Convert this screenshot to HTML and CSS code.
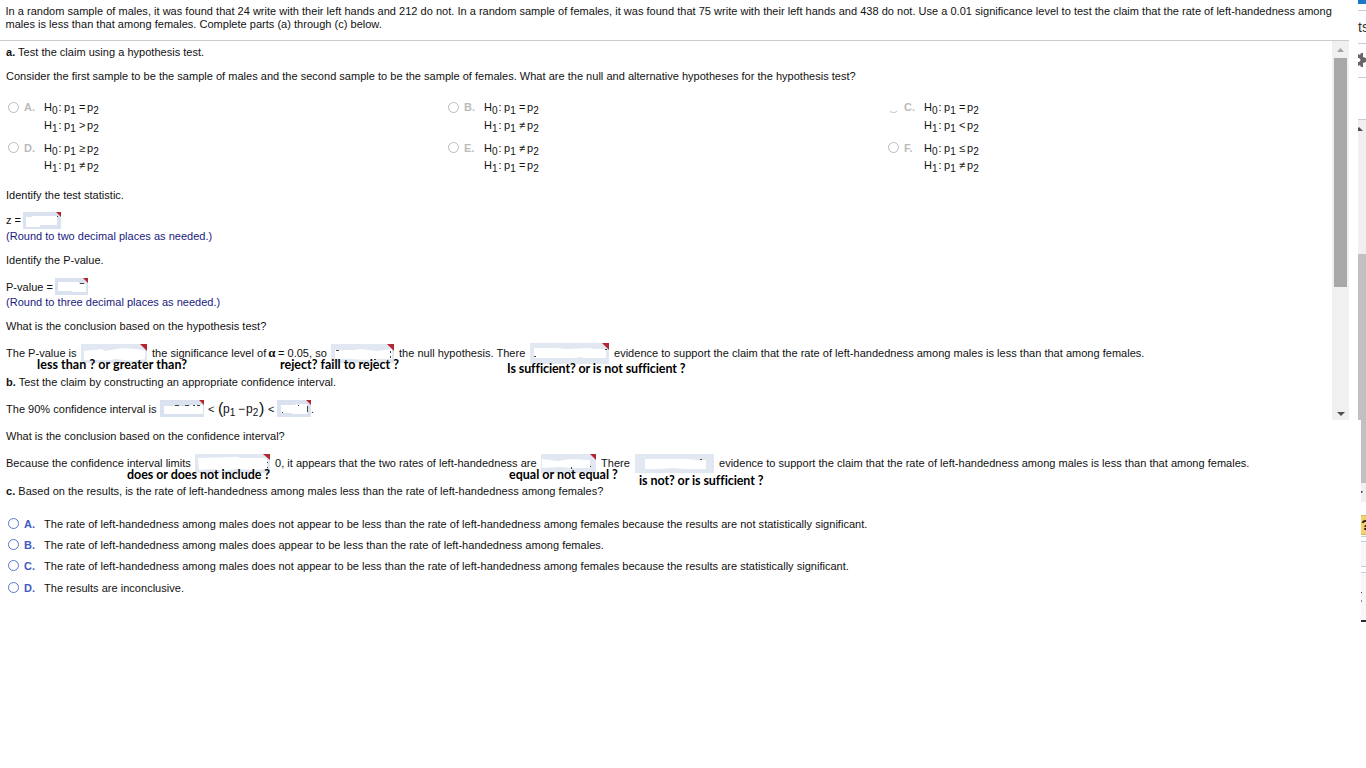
FILE: index.html
```html
<!DOCTYPE html>
<html lang="en">
<head>
<meta charset="utf-8">
<title>Hypothesis test for two proportions</title>
<link rel="stylesheet" href="styles.css">
</head>
<body>
<div class="page">
  <main class="question">
    <header class="prompt">
      <p>In a random sample of males, it was found that 24 write with their left hands and 212 do not. In a random sample of females, it was found that 75 write with their left hands and 438 do not. Use a 0.01 significance level to test the claim that the rate of left-handedness among</p>
      <p>males is less than that among females. Complete parts (a) through (c) below.</p>
    </header>
    <div class="pane">
      <section class="content">
        <p class="row"><span><b>a.</b> Test the claim using a hypothesis test.</span></p>
        <p class="row mt10">Consider the first sample to be the sample of males and the second sample to be the sample of females. What are the null and alternative hypotheses for the hypothesis test?</p>

        <div class="hypotheses">
          <div class="option"><i class="radio"></i><b class="letter">A.</b><div class="formulas">
            <div class="f"><span class="h">H<sub>0</sub>:</span><span class="p">p<sub>1</sub></span><span class="op">=</span><span>p<sub>2</sub></span></div>
            <div class="f"><span class="h">H<sub>1</sub>:</span><span class="p">p<sub>1</sub></span><span class="op">&gt;</span><span>p<sub>2</sub></span></div></div></div>
          <div class="option"><i class="radio"></i><b class="letter">B.</b><div class="formulas">
            <div class="f"><span class="h">H<sub>0</sub>:</span><span class="p">p<sub>1</sub></span><span class="op">=</span><span>p<sub>2</sub></span></div>
            <div class="f"><span class="h">H<sub>1</sub>:</span><span class="p">p<sub>1</sub></span><span class="op">≠</span><span>p<sub>2</sub></span></div></div></div>
          <div class="option"><i class="radio faded"></i><b class="letter">C.</b><div class="formulas">
            <div class="f"><span class="h">H<sub>0</sub>:</span><span class="p">p<sub>1</sub></span><span class="op">=</span><span>p<sub>2</sub></span></div>
            <div class="f"><span class="h">H<sub>1</sub>:</span><span class="p">p<sub>1</sub></span><span class="op">&lt;</span><span>p<sub>2</sub></span></div></div></div>
          <div class="option lower"><i class="radio"></i><b class="letter">D.</b><div class="formulas">
            <div class="f"><span class="h">H<sub>0</sub>:</span><span class="p">p<sub>1</sub></span><span class="op">≥</span><span>p<sub>2</sub></span></div>
            <div class="f"><span class="h">H<sub>1</sub>:</span><span class="p">p<sub>1</sub></span><span class="op">≠</span><span>p<sub>2</sub></span></div></div></div>
          <div class="option lower"><i class="radio"></i><b class="letter">E.</b><div class="formulas">
            <div class="f"><span class="h">H<sub>0</sub>:</span><span class="p">p<sub>1</sub></span><span class="op">≠</span><span>p<sub>2</sub></span></div>
            <div class="f"><span class="h">H<sub>1</sub>:</span><span class="p">p<sub>1</sub></span><span class="op">=</span><span>p<sub>2</sub></span></div></div></div>
          <div class="option lower"><i class="radio"></i><b class="letter">F.</b><div class="formulas">
            <div class="f"><span class="h">H<sub>0</sub>:</span><span class="p">p<sub>1</sub></span><span class="op">≤</span><span>p<sub>2</sub></span></div>
            <div class="f"><span class="h">H<sub>1</sub>:</span><span class="p">p<sub>1</sub></span><span class="op">≠</span><span>p<sub>2</sub></span></div></div></div>
        </div>

        <p class="row mt14">Identify the test statistic.</p>
        <div class="row mt11"><span class="w17">z =</span>
          <svg class="blank" width="38" height="17"><path class="box" d="M0 0h38v17H0z"/><path class="hole" d="M3 5h6V4h25v9H17v2H3z"/><path class="flag" d="M33 0h5v5z"/><path class="ink" d="M34 4h1v1h-1z"/></svg>
        </div>
        <p class="row mt2 hint">(Round to two decimal places as needed.)</p>
        <p class="row mt10">Identify the P-value.</p>
        <div class="row mt13"><span class="w49">P-value =</span>
          <svg class="blank up" width="33" height="17"><path class="box" d="M0 0h33v17H0z"/><path class="hole" d="M3 4h21v2h7v8H17v-1H3z"/><path class="flag" d="M28 0h5v5z"/><path class="ink" d="M25 5h4v1h-4z"/></svg>
        </div>
        <p class="row mt1 hint">(Round to three decimal places as needed.)</p>
        <p class="row mt10">What is the conclusion based on the hypothesis test?</p>

        <div class="row mt13">
          <span class="w75">The P-value is</span>
          <svg class="blank pale" width="66" height="19"><path class="box" d="M0 0h66v19H0z"/><path class="hole" d="M3 7l18-2 3 2 17-3 23 2v9l-12 2-17-2-7 1H3z"/><path class="flag" d="M59 0h7v7z"/></svg>
          <span class="gap5 w131">the significance level of <span class="alpha">α</span></span><span class="w53">= 0.05, so</span>
          <svg class="blank pale" width="63" height="19"><path class="box" d="M0 0h63v19H0z"/><path class="hole" d="M4 6h20l6-1 16 2 15-2v10H46l-7 1-21-1H4z"/><path class="flag" d="M56 0h7v7z"/><path class="ink" d="M5 6h3v1H5zM59 7h1v2h-1zM59 12h1v2h-1zM43 15h2v1h-2z"/></svg>
          <span class="gap5 w136">the null hypothesis. There</span>
          <svg class="blank pale" width="79" height="21"><path class="box" d="M0 0h79v21H0z"/><path class="hole" d="M4 5h22l12 1 20-1 7 1h11v9H54l-4-1-6 1H4z"/><path class="flag" d="M72 0h7v7z"/><path class="ink" d="M4 13h2v1H4zM75 6h2v1h-2z"/></svg>
          <span class="gap5">evidence to support the claim that the rate of left-handedness among males is less than that among females.</span>
          <span class="note n1">less than ? or greater than?</span>
          <span class="note n2">reject? faill to reject ?</span>
          <span class="note n3">Is sufficient? or is not sufficient ?</span>
        </div>

        <p class="row mt15"><span><b>b.</b> Test the claim by constructing an appropriate confidence interval.</span></p>
        <div class="row mt13">
          <span class="w154">The 90% confidence interval is</span>
          <svg class="blank up" width="44" height="17"><path class="box" d="M0 0h44v17H0z"/><path class="hole" d="M4 6h27V5h12v9H4z"/><path class="flag" d="M39 0h5v5z"/><path class="ink" d="M15 5h4v1h-4zM25 5h4v1h-4zM33 5h2v1h-2zM37 5h3v1h-3z"/></svg>
          <span class="lt">&lt;</span><span class="diff"><span class="paren">(</span><span class="w15">p<sub>1</sub></span><span class="w8">−</span><span class="w13">p<sub>2</sub></span><span class="paren">)</span></span><span class="lt2">&lt;</span>
          <svg class="blank up" width="34" height="17"><path class="box" d="M0 0h34v17H0z"/><path class="hole" d="M4 5h13l3-1h10v10H15v-1H4z"/><path class="flag" d="M29 0h5v5z"/><path class="ink" d="M5 12h1v1H5zM21 5h1v1h-1zM30 6h1v6h-1z"/></svg>
          <span>.</span>
        </div>
        <p class="row mt13">What is the conclusion based on the confidence interval?</p>
        <div class="row mt13">
          <span class="w189">Because the confidence interval limits</span>
          <svg class="blank pale" width="75" height="19"><path class="box" d="M0 0h75v19H0z"/><path class="hole" d="M3 4l41-1v1h28v11l-13 1-19-1-12 2-9-2-15 1z"/><path class="flag" d="M68 0h7v6z"/><path class="ink" d="M72 8h1v1h-1zM72 13h1v1h-1z"/></svg>
          <span class="gap5 w271">0, it appears that the two rates of left-handedness are</span>
          <svg class="blank pale" width="55" height="19"><path class="box" d="M0 0h55v19H0z"/><path class="hole" d="M1 5l16 2 13-2 19 1v8H32l-14-1-17 1z"/><path class="flag" d="M49 0h6v6z"/><path class="ink" d="M30 13h1v2h-1zM49 12h1v1h-1z"/></svg>
          <span class="gap5 w39">There</span>
          <svg class="blank pale" width="79" height="19"><path class="box" d="M0 0h79v19H0z"/><path class="hole" d="M10 5h43l9 1h9v9H49l-9-1-15 1H10z"/><path class="ink" d="M65 5h2v1h-2z"/></svg>
          <span class="gap5">evidence to support the claim that the rate of left-handedness among males is less than that among females.</span>
          <span class="note n4">does or does not include ?</span>
          <span class="note n5">equal or not equal ?</span>
          <span class="note n6">is not? or is sufficient ?</span>
        </div>

        <p class="row mt14"><span><b>c.</b> Based on the results, is the rate of left-handedness among males less than the rate of left-handedness among females?</span></p>
        <div class="answers">
          <div class="answer"><i class="radio"></i><b class="letter">A.</b><span>The rate of left-handedness among males does not appear to be less than the rate of left-handedness among females because the results are not statistically significant.</span></div>
          <div class="answer"><i class="radio"></i><b class="letter">B.</b><span>The rate of left-handedness among males does appear to be less than the rate of left-handedness among females.</span></div>
          <div class="answer"><i class="radio"></i><b class="letter">C.</b><span>The rate of left-handedness among males does not appear to be less than the rate of left-handedness among females because the results are statistically significant.</span></div>
          <div class="answer last"><i class="radio"></i><b class="letter">D.</b><span>The results are inconclusive.</span></div>
        </div>
      </section>
      <div class="scrollbar">
        <svg width="17" height="17"><path d="M5 11h7L8.500 7z" fill="#a3a3a3"/></svg>
        <div class="thumb"></div>
        <svg class="down" width="17" height="17"><path d="M5 9h8l-4 4z" fill="#505050"/></svg>
      </div>
    </div>
  </main>
  <aside class="edge">
    <div class="blue"></div>
    <div class="strip s1"></div>
    <div class="strip s2">ts</div>
    <div class="strip s3"><svg width="8" height="16"><path d="M0 2l2 1 1-2h2v4l3 1v4l-3 1v4H3l-1-2-2 1v-4h1c2-1 2-3 0-4H0z" fill="#666"/></svg></div>
    <div class="strip s4"></div>
    <div class="track"><svg width="8" height="14"><path d="M0 11V8l1-1 4 4z" fill="#505050"/></svg></div>
    <div class="thumb2"></div>
    <div class="thumb3"></div>
    <div class="track2"><svg width="5" height="19"><path d="M0 8h2l-1 2H0z" fill="#505050"/></svg></div>
    <div class="help">?</div>
    <div class="card c1"></div>
    <div class="card c2"></div>
    <div class="card c3"><svg width="5" height="48"><path d="M0 19h1v1H0z" fill="#333"/><path d="M0 27h1v2H0z" fill="#888"/></svg></div>
  </aside>
</div>
</body>
</html>
```
FILE: styles.css
```css
* { box-sizing: border-box; }
body { margin: 0; background: #fff; color: #111; font: 11px/14px "Liberation Sans", Arial, sans-serif; letter-spacing: 0.02px; overflow: hidden; }
p { margin: 0; white-space: nowrap; }
svg { display: block; }
.page { display: flex; width: 1366px; height: 768px; overflow: hidden; }
.question { width: 1349px; flex: none; }
.prompt { height: 41px; padding: 4px 0 0 5.500px; border-bottom: 1px solid #c8cdd0; }
.prompt p { height: 13px; }
.pane { display: flex; }
.content { flex: 1; min-width: 0; padding: 4px 0 0 6px; }
.row { position: relative; display: flex; align-items: center; height: 14px; white-space: nowrap; }
.row > span, .blank { flex: none; }
.mt1 { margin-top: 1px; } .mt2 { margin-top: 2px; } .mt10 { margin-top: 10px; } .mt11 { margin-top: 11px; }
.mt13 { margin-top: 13px; } .mt14 { margin-top: 14px; } .mt15 { margin-top: 15px; }
.w17 { width: 17px; } .w49 { width: 49px; } .w75 { width: 75px; } .w131 { width: 131px; } .w53 { width: 53px; }
.w136 { width: 136px; } .w154 { width: 154px; } .w189 { width: 189px; } .w271 { width: 271px; } .w39 { width: 39px; }
.w15 { width: 15px; } .w8 { width: 8px; } .w13 { width: 13px; }
.gap5 { padding-left: 5px; }
.up { margin-bottom: 1px; }
.hint { color: #1a1a80; }
.alpha { font-family: "Liberation Serif", serif; font-size: 13px; font-weight: bold; line-height: 0; margin-left: -1px; }
sub { font-size: 10px; line-height: 0; vertical-align: -3px; }

.hypotheses { display: grid; grid-template-columns: repeat(3, 440px); row-gap: 7px; margin-top: 16px; }
.option { display: flex; height: 34px; }
.radio { flex: none; width: 11px; height: 11px; margin: 3px 0 0 2px; border: 1px solid #bbb; border-radius: 50%; }
.faded { border-color: transparent transparent #ccc; }
.letter { width: 20px; margin: 1px 0 0 5px; color: #bbb; }
.f { display: flex; height: 17px; padding-top: 2px; }
.f:first-child { padding-top: 1px; }
.lower .f { padding-top: 1px; }
.lower .radio { margin-top: 2px; }
.h { width: 20px; } .p { width: 15px; } .op { width: 8px; }
.h sub { margin-right: 1px; }

.box { fill: #dae2f0; }
.pale .box { fill: #e2e8f2; }
.hole { fill: #fff; }
.flag { fill: #b22730; }
.ink { fill: #444; }
.note { position: absolute; color: #000; font: bold 12.500px/14px Lato, sans-serif; letter-spacing: 0; }
.n1 { left: 31px; top: 12px; letter-spacing: 0.05px; } .n2 { left: 274px; top: 12px; } .n3 { left: 501px; top: 16px; letter-spacing: -0.1px; }
.n4 { left: 121px; top: 12px; letter-spacing: -0.05px; } .n5 { left: 503px; top: 12px; } .n6 { left: 633px; top: 18px; letter-spacing: -0.08px; }

.lt { width: 14px; padding-left: 4px; }
.diff { display: flex; width: 46px; font-size: 12px; }
.paren { width: 5px; font-size: 16px; }
.lt2 { width: 13px; padding-left: 4px; }

.answers { padding-top: 19px; }
.answer { display: flex; height: 14px; margin-bottom: 7px; white-space: nowrap; }
.last { margin-top: 8px; }
.answer .radio { margin-top: 1px; border-color: #5a76cc; }
.answer .letter { margin-top: 0; color: #3f5bbd; }

.scrollbar { display: flex; flex-direction: column; width: 17px; height: 379px; background: #f0f0f0; }
.thumb { width: 13px; height: 229px; margin-left: 2px; background: #a8a8a8; }
.down { margin-top: auto; }

.edge { width: 8px; margin-left: 9px; flex: none; }
.blue { height: 4px; background: #1a78c8; }
.strip { border-bottom: 1px solid #c8ccd2; overflow: hidden; }
.s1 { height: 7px; }
.s2 { height: 33px; font: 14px/33px "Liberation Sans", sans-serif; color: #333; }
.s3 { height: 34px; padding-top: 8px; }
.s4 { height: 42px; }
.track { height: 134px; background: #f0f0f0; }
.thumb2 { height: 166px; background: #c1c1c1; }
.thumb3 { height: 63px; margin-left: 3px; background: #c1c1c1; }
.track2 { height: 19px; margin-left: 3px; background: #f0f0f0; }
.help { height: 20px; margin: 13px 0 1px 3px; overflow: hidden; background: #f0d070; border: 1px solid #d4b860; border-width: 1px 0; font: bold 15px/18px "Liberation Sans", sans-serif; color: #222; }
.card { margin-left: 3px; background: #f7f7f7; border-top: 1px solid #c9ccd2; }
.c1 { height: 1px; margin-top: 1px; }
.c2 { height: 26px; margin-top: 4px; border-bottom: 1px solid #c9ccd2; }
.c3 { height: 50px; margin-top: 5px; border-bottom: 2px solid #2a2a30; }
```
